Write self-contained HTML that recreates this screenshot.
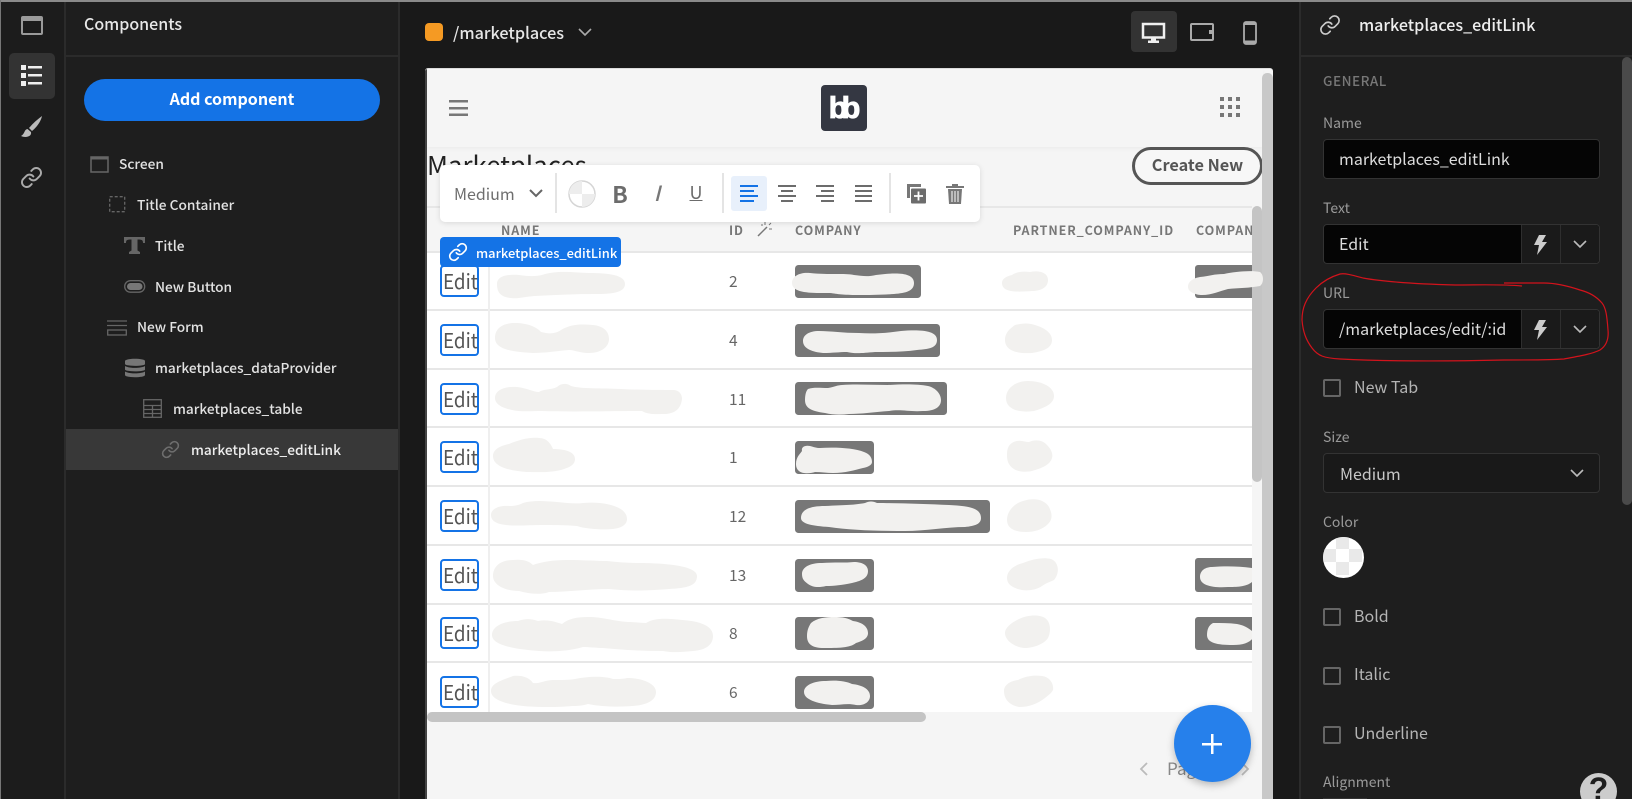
<!DOCTYPE html>
<html><head><meta charset="utf-8"><style>
html,body{margin:0;padding:0;width:1632px;height:799px;overflow:hidden;background:#191919}
*{box-sizing:border-box}
body{position:relative;font-family:"Noto Sans CJK JP","Liberation Sans",sans-serif}
.b{position:absolute}
.t{position:absolute;white-space:nowrap;line-height:20px;height:20px}
svg{position:absolute;overflow:visible}
.tree{color:#e2e2e2;font-size:13.700px;font-weight:500}
.lab{color:#9a9a9a;font-size:14px}
.inp{position:absolute;left:1323px;width:277px;height:40px;background:#050505;border:1px solid #333;border-radius:4px}
.sq{position:absolute;top:0;bottom:0;background:#1a1a1a;border-left:1px solid #2e2e2e}
.cb{position:absolute;left:1323px;width:18px;height:18px;border:2px solid #666;border-radius:2px}
.cl{color:#b4b4b4;font-size:16px}
.edit{position:absolute;left:440px;width:39px;background:#fff;border:2.500px solid #1473e6;border-radius:4px}
.et{position:absolute;left:443px;font-size:20.500px;color:#555;line-height:24px;white-space:nowrap;transform:scaleX(.92);transform-origin:left center}
.id{position:absolute;left:729px;font-size:15.500px;color:#666;line-height:20px}
.th{position:absolute;top:219.500px;font-size:12.500px;line-height:20px;font-weight:700;color:#777;letter-spacing:.9px;white-space:nowrap}
.rl{position:absolute;left:427px;width:825px;height:2px;background:#e7e7e7}
</style></head><body>
<!-- edges -->
<div class="b" style="left:0;top:0;width:1632px;height:2px;background:#8a8a8a"></div>
<div class="b" style="left:0;top:0;width:1px;height:799px;background:#777"></div>
<!-- rail -->
<div class="b" style="left:1px;top:2px;width:63px;height:797px;background:#1c1c1c"></div>
<div class="b" style="left:64px;top:2px;width:2px;height:797px;background:#2b2b2b"></div>
<!-- left panel -->
<div class="b" style="left:66px;top:2px;width:332px;height:797px;background:#1e1e1e"></div>
<div class="b" style="left:66px;top:55px;width:332px;height:2px;background:#2b2b2b"></div>
<div class="b" style="left:398px;top:2px;width:2px;height:797px;background:#2b2b2b"></div>
<div class="b" style="left:9px;top:53px;width:46px;height:46px;background:#333;border-radius:5px"></div>
<svg style="left:21px;top:16px" width="22" height="19"><rect x="1" y="1" width="20" height="17" rx="1" fill="none" stroke="#9a9a9a" stroke-width="2"/><rect x="1" y="1" width="20" height="4" fill="#9a9a9a"/></svg>
<svg style="left:21px;top:65px" width="22" height="21" fill="#eee"><rect y="0" width="5" height="5"/><rect y="8" width="5" height="5"/><rect y="16" width="5" height="5"/><rect x="7" y="1" width="14" height="2.500"/><rect x="7" y="9" width="14" height="2.500"/><rect x="7" y="17" width="14" height="2.500"/></svg>
<svg style="left:21px;top:116px" width="22" height="22" fill="#bbb"><path d="M21 0 C17 3 12 7 8 12 L11 15 C16 11 20 5 21 0Z"/><path d="M6.500 13 C3 13.500 4 18 0 20 C4 22 11 21 10 16Z"/></svg>
<svg style="left:20px;top:166px" width="23" height="23" viewBox="0 0 24 24" fill="none" stroke="#aaa" stroke-width="2" stroke-linecap="round"><path d="M10 13a5 5 0 0 0 7.540.54l3-3a5 5 0 0 0-7.070-7.070l-1.720 1.710M14 11a5 5 0 0 0-7.540-.54l-3 3a5 5 0 0 0 7.070 7.070l1.710-1.710"/></svg>

<div class="t" style="left:84px;top:13px;color:#e8e8e8;font-size:16px;font-weight:500">Components</div>
<div class="b" style="left:84px;top:79px;width:296px;height:42px;border-radius:21px;background:#1473e6"></div>
<div class="t" style="left:84px;top:88px;width:296px;text-align:center;color:#fff;font-size:16px;font-weight:700">Add component</div>
<div class="b" style="left:66px;top:429px;width:332px;height:41px;background:#383838"></div>

<svg style="left:90px;top:156px" width="19" height="17"><rect x="1" y="1" width="17" height="15" fill="none" stroke="#666" stroke-width="1.500"/><rect x="1" y="1" width="17" height="2.500" fill="#666"/></svg>
<div class="t tree" style="left:119px;top:153px">Screen</div>
<svg style="left:109px;top:196px" width="17" height="17"><rect x=".7" y=".7" width="15" height="15" fill="none" stroke="#666" stroke-width="1.300" stroke-dasharray="3 2"/></svg>
<div class="t tree" style="left:137px;top:194px">Title Container</div>
<svg style="left:124px;top:237px" width="21" height="17" fill="#666"><path d="M0 0H21V6H19C19 3 18 2.500 13.500 2.500V13.500L16 15V17H5V15L7.500 13.500V2.500C3 2.500 2 3 2 6H0Z"/></svg>
<div class="t tree" style="left:155px;top:235px">Title</div>
<svg style="left:124px;top:280px" width="22" height="13"><rect x=".7" y=".7" width="20" height="11.500" rx="5.700" fill="none" stroke="#666" stroke-width="1.300"/><rect x="3" y="3" width="15.500" height="7" rx="3.500" fill="#777"/></svg>
<div class="t tree" style="left:155px;top:276px">New Button</div>
<svg style="left:107px;top:320px" width="20" height="16" fill="none" stroke="#666" stroke-width="1.300"><path d="M0 1H20M0 5.500H20"/><rect x=".7" y="10" width="18.600" height="5"/></svg>
<div class="t tree" style="left:137px;top:316px">New Form</div>
<svg style="left:125px;top:358px" width="20" height="20" fill="#777"><path d="M0 3C0 0 20 0 20 3V6C20 8.500 0 8.500 0 6Z"/><path d="M0 8C4 10.500 16 10.500 20 8V11.500C20 14 0 14 0 11.500Z"/><path d="M0 13.500C4 16 16 16 20 13.500V17C20 20 0 20 0 17Z"/></svg>
<div class="t tree" style="left:155px;top:357px">marketplaces_dataProvider</div>
<svg style="left:143px;top:399px" width="19" height="19" fill="none" stroke="#666" stroke-width="1.300"><rect x=".7" y=".7" width="17.600" height="17.600"/><path d="M1 6.500H18M1 10.500H18M1 14.500H18M9.500 6.500V18" /></svg>
<div class="t tree" style="left:173px;top:398px">marketplaces_table</div>
<svg style="left:161px;top:440px" width="19" height="19" viewBox="0 0 24 24" fill="none" stroke="#6e6e6e" stroke-width="2" stroke-linecap="round"><path d="M10 13a5 5 0 0 0 7.540.54l3-3a5 5 0 0 0-7.070-7.070l-1.720 1.710M14 11a5 5 0 0 0-7.540-.54l-3 3a5 5 0 0 0 7.070 7.070l1.710-1.710"/></svg>
<div class="t tree" style="left:191px;top:439px;color:#eee">marketplaces_editLink</div>

<!-- top bar -->
<div class="b" style="left:425px;top:23px;width:18px;height:18px;border-radius:4px;background:#f59a23"></div>
<div class="t" style="left:453px;top:21.500px;color:#e6e6e6;font-size:16.200px;font-weight:500">/marketplaces</div>
<svg style="left:578px;top:28px" width="14" height="9" fill="none" stroke="#aaa" stroke-width="1.600"><path d="M1 1L7 7L13 1"/></svg>
<div class="b" style="left:1131px;top:11px;width:46px;height:41px;border-radius:4px;background:#333"></div>
<svg style="left:1142px;top:23px" width="23" height="20"><rect x="1" y="1" width="21" height="13.500" fill="none" stroke="#f0f0f0" stroke-width="2.500"/><rect x="9" y="15" width="5" height="3" fill="#f0f0f0"/><rect x="6" y="17.500" width="11" height="2.500" fill="#f0f0f0"/></svg>
<svg style="left:1190px;top:23px" width="24" height="18"><rect x="1" y="1" width="22" height="16" rx="1" fill="none" stroke="#aaa" stroke-width="2"/><rect x="19" y="7" width="4" height="4" fill="#aaa"/></svg>
<svg style="left:1243px;top:21px" width="14" height="24"><rect x="1" y="1" width="12" height="22" rx="2" fill="none" stroke="#aaa" stroke-width="1.800"/><rect x="1" y="1" width="12" height="3" fill="#aaa"/><rect x="1" y="19.500" width="12" height="3.500" fill="#aaa"/></svg>

<!-- frame -->
<div class="b" style="left:425px;top:68px;width:848px;height:731px;background:#f5f5f5;border-top:1px solid #ddd;border-radius:3px 3px 0 0;overflow:hidden">
 <div class="b" style="left:0;top:0;width:2px;height:731px;background:#444"></div>
</div>
<div class="t" style="left:427px;top:148px;height:34px;line-height:34px;font-size:25.800px;color:#222">Marketplaces</div>
<div class="b" style="left:427px;top:69px;width:836px;height:78px;background:#f5f5f5;box-shadow:0 2px 4px rgba(0,0,0,.04)"></div>
<svg style="left:449px;top:100px" width="19" height="16" fill="#777"><rect width="19" height="2.500" y="0"/><rect width="19" height="2.500" y="7"/><rect width="19" height="2.500" y="13.500"/></svg>
<div class="b" style="left:821px;top:85px;width:46px;height:46px;border-radius:4px;background:#343742"></div>
<div class="t" style="left:821px;top:90px;width:46px;height:36px;line-height:36px;text-align:center;font-family:'Liberation Sans',sans-serif;font-weight:700;font-size:31px;letter-spacing:-6px;text-indent:-5px;color:#fff;-webkit-text-stroke:.8px #fff">bb</div>
<svg style="left:1220px;top:97px" width="20" height="20" fill="#777"><rect width="4" height="4"/><rect x="8" width="4" height="4"/><rect x="16" width="4" height="4"/><rect y="8" width="4" height="4"/><rect x="8" y="8" width="4" height="4"/><rect x="16" y="8" width="4" height="4"/><rect y="16" width="4" height="4"/><rect x="8" y="16" width="4" height="4"/><rect x="16" y="16" width="4" height="4"/></svg>
<div class="b" style="left:1132px;top:147px;width:131px;height:38px;border:3px solid #555;border-radius:19px;background:#f7f7f7"></div>
<div class="t" style="left:1132px;top:154px;width:131px;text-align:center;font-size:16.300px;font-weight:700;color:#555">Create New</div>
<!-- scrollbars -->
<div class="b" style="left:1262px;top:73px;width:11px;height:726px;background:#c8c8c8;border-radius:5px 5px 0 0"></div>

<!-- table -->
<div class="b" style="left:427px;top:206px;width:825px;height:2px;background:#e7e7e7"></div>
<div class="b" style="left:427px;top:251px;width:825px;height:461px;background:#fff;border-top:2px solid #e7e7e7"></div>
<div class="th" style="left:501px">NAME</div>
<div class="th" style="left:729px">ID</div>
<svg style="left:757px;top:222px" width="15" height="15" fill="none" stroke="#777" stroke-width="1.500"><path d="M1 14L10 5"/><path d="M8 0V3M12 3L14 1M12 7H15M6 3H4" stroke-width="1"/></svg>
<div class="th" style="left:795px">COMPANY</div>
<div class="th" style="left:1013px">PARTNER_COMPANY_ID</div>
<div class="b" style="left:1196px;top:208px;width:56px;height:43px;overflow:hidden"><div class="th" style="left:0;top:11.500px">COMPANY</div></div>
<div class="rl" style="top:309px"></div><div class="rl" style="top:368px"></div><div class="rl" style="top:426px"></div><div class="rl" style="top:485px"></div><div class="rl" style="top:544px"></div><div class="rl" style="top:603px"></div><div class="rl" style="top:661px"></div>
<div class="b" style="left:488px;top:252px;width:2px;height:460px;background:#efefef"></div>

<div class="edit" style="top:265px;height:32px"></div><div class="et" style="top:268px">Edit</div>
<div class="edit" style="top:324px;height:32px"></div><div class="et" style="top:327px">Edit</div>
<div class="edit" style="top:383px;height:32px"></div><div class="et" style="top:386px">Edit</div>
<div class="edit" style="top:441px;height:32px"></div><div class="et" style="top:444px">Edit</div>
<div class="edit" style="top:500px;height:32px"></div><div class="et" style="top:503px">Edit</div>
<div class="edit" style="top:559px;height:32px"></div><div class="et" style="top:562px">Edit</div>
<div class="edit" style="top:617px;height:32px"></div><div class="et" style="top:620px">Edit</div>
<div class="edit" style="top:676px;height:32px"></div><div class="et" style="top:679px">Edit</div>

<div class="id" style="top:271px">2</div><div class="id" style="top:330px">4</div><div class="id" style="top:389px">11</div><div class="id" style="top:447px">1</div><div class="id" style="top:506px">12</div><div class="id" style="top:565px">13</div><div class="id" style="top:623px">8</div><div class="id" style="top:682px">6</div>

<!-- chips and scribbles -->
<svg style="left:0;top:0" width="1632" height="799">
<g fill="#777">
<rect x="795" y="265" width="126" height="33" rx="3.500"/><rect x="795" y="324" width="145" height="33" rx="3.500"/><rect x="795" y="382" width="152" height="33" rx="3.500"/><rect x="795" y="441" width="79" height="33" rx="3.500"/><rect x="795" y="500" width="195" height="33" rx="3.500"/><rect x="795" y="559" width="79" height="33" rx="3.500"/><rect x="795" y="617" width="79" height="33" rx="3.500"/><rect x="795" y="676" width="79" height="33" rx="3.500"/>
<path d="M1195 268a3 3 0 0 1 3-3h55v33h-55a3 3 0 0 1-3-3z"/><path d="M1195 561a3 3 0 0 1 3-3h54v34h-54a3 3 0 0 1-3-3z"/><path d="M1195 620a3 3 0 0 1 3-3h54v33h-54a3 3 0 0 1-3-3z"/>
</g>
<g fill="#f2f1ef">
<!-- names -->
<path d="M497 284c0-8 10-10 22-9c14 2 20 1 26-1c16-4 30-1 44-1c20 0 36 2 36 11c0 9-14 10-30 10c-20 0-40 1-60 2c-14 1-16 3-24 2c-10-1-14-5-14-14z"/>
<path d="M495 338c0-10 8-15 20-15c12 0 22 4 26 9c8 2 14 2 20-2c10-6 20-6 32-5c10 1 16 6 16 14c0 8-8 14-20 14c-10 0-14-3-20-3c-12 1-24 3-36 3c-22-1-38-4-38-15z"/>
<path d="M495 398c0-8 10-12 22-11c10 1 16 5 22 5c4-3 12-2 18-5c4-4 10-4 14-1c10 3 30 2 50 3c20 1 40 1 52 1c6 0 9 4 9 9c-1 8-5 14-16 15c-8 0-18 1-24-3c-30 0-70 1-100 0c-10 0-22 1-30-1c-10-2-17-6-17-12z"/>
<path d="M493 456c0-6 6-10 16-12c10-4 20-7 30-6c8 0 12 6 14 11c10 0 22 2 22 10c0 7-8 9-14 11c-14 3-24 2-34 2c-14-1-34-4-34-16z"/>
<path d="M491 515c0-6 8-10 18-9c6 0 10-1 14-3c10-3 22-2 34-1c10 1 18 2 26 1c20-2 44 3 44 16c0 6-6 9-14 10c-10 1-28 0-36-3c-12-1-24-1-36-1c-20 0-50 4-50-10z"/>
<path d="M493 576c0-10 8-16 20-16c10-1 16 1 20 5c8-3 20-5 34-5c16 0 30 1 40 1c10 1 20 2 30 2c24 0 60 2 60 13c0 10-10 12-28 13c-24 2-40 2-60 0c-22 0-40 3-60 3c-8 3-20 2-30-1c-14 0-26-6-26-15z"/>
<path d="M492 635c0-9 12-14 26-14c8-3 14-2 20 0c10-2 18 1 24 3c6-5 14-7 26-7c16 0 24 4 40 5c8 0 12 1 18 1c8-5 20-5 36-3c18 1 31 6 31 16c0 8-6 14-20 15c-10 1-20 2-30 0c-20 0-40-1-60-3c-6 0-14-1-20-1c-14 4-30 5-44 4c-26-2-47-6-47-16z"/>
<path d="M491 691c0-8 12-11 22-15c8-1 16 1 20 7c8 1 10-3 22-3c6 0 14 0 20-1c14-3 30-3 38 0c6 0 10 0 14-1c16 0 29 6 29 14c0 8-8 13-24 14c-10 1-30 1-44-2c-6 2-12 2-16 2c-20 2-81 3-81-15z"/>
<!-- chips -->
<path d="M792 283c0-7 8-11 18-10c20 2 34 0 44 2c8 1 14 2 22 0c16-2 38-4 38 8c0 8-8 10-20 11c-14 1-24 1-36 1c-16 0-20-1-28-2c-16 0-38 1-38-10z"/>
<path d="M803 341c0-6 6-10 16-10c12 0 24 2 40 2c14 1 28 0 42-2c14-1 36-2 36 9c0 8-8 9-20 10c-14 2-28 2-42 2c-12 1-20 2-28 0c-8 0-14 1-24 1c-10-1-20-4-20-12z"/>
<path d="M805 400c0-5 1-9 3-11c6-2 12-1 20-1c6-1 10-3 14-3c14-1 30 0 46 0c16-1 30-1 40 1c8 2 13 8 13 14c0 7-6 11-18 11c-14 1-22-2-34 0c-14 1-28 3-40 3c-8 1-16 1-24-1c-14-2-20-5-20-13z"/>
<path d="M796 464c0-7 4-10 6-13c-1-4 3-6 8-5c4 1 6 2 10 2c16-1 34 0 44 4c6 2 8 6 8 10c0 3-4 5-9 6c-8 2-18 5-30 5c-6 0-12-1-18-1c-6 2-19 3-19-8z"/>
<path d="M801 518c0-8 8-12 24-12c20-1 30-1 40-3c4-2 8-2 12 0c20 0 50 1 72 2c20 1 32 3 32 13c0 6-6 8-16 9c-18 0-40 4-60 4c-30 0-56-1-76-4c-16-1-28-3-28-9z"/>
<path d="M802 574c0-7 8-11 20-11c12-1 24 0 32-1c8 0 14 3 14 9c0 8-8 10-16 12c-10 2-18 3-26 3c-8 2-14 1-18-2c-4-3-6-5-6-10z"/>
<path d="M807 636c0-6 2-10 4-13c6-5 14-6 24-6c10 0 14 2 18 4c8 1 15 5 15 12c0 6-6 8-12 10c-6 5-18 5-32 5c-12 0-17-4-17-12z"/>
<path d="M804 692c0-7 10-11 22-11c10-1 20 0 26 3c10 1 18 5 18 12c0 6-6 10-14 9c-8-2-16 0-24 0c-10-1-28-4-28-13z"/>
<!-- partner -->
<path d="M1002 283c0-5 6-7 10-8c4-3 10-4 18-3c10-2 18 1 18 8c0 8-8 11-16 11c-14 1-30 2-30-8z"/>
<path d="M1005 340c0-8 6-12 10-15c8-2 14-2 20 0c10 3 17 8 17 15c0 8-8 11-20 13c-14 1-27-2-27-13z"/>
<path d="M1006 398c0-10 10-17 22-17c14 0 26 6 26 15c0 8-10 12-20 15c-14 2-28-1-28-13z"/>
<path d="M1007 454c0-8 4-12 10-13c4-1 8 1 12 1c6-3 14-2 18 3c5 5 6 10 5 13c-2 7-10 10-20 13c-16 3-22-4-24-9c-1-3-1-5-1-8z"/>
<path d="M1007 520c0-8 6-16 16-19c12-4 22-1 26 6c4 8 3 13-1 17c-6 6-14 8-22 8c-12 0-19-4-19-12z"/>
<path d="M1007 578c0-8 8-13 16-15c10-4 20-6 28-4c8 3 9 14 3 21c-4 2-8 3-12 6c-6 4-14 5-20 4c-10-2-15-6-15-12z"/>
<path d="M1005 633c0-6 8-11 14-14c8-4 20-5 26-1c6 4 6 14 3 20c-4 6-14 10-24 10c-6 0-19-6-19-15z"/>
<path d="M1004 691c0-6 6-10 14-11c8-4 16-5 24-4c8 1 12 8 11 14c-2 4-6 6-8 8c-8 6-16 9-26 9c-10-2-15-8-15-16z"/>
<!-- last col -->
<path d="M1200 577c0-7 6-10 12-10c12-1 26-1 40 1v14c-6 5-16 5-24 5c-14 1-28-1-28-10z"/>
<path d="M1207 635c0-6 2-10 6-12c8 0 16 0 24 1c6 1 12 4 16 8v6c-4 5-10 7-20 7c-16 0-26-2-26-10z"/>
</g>
</svg>

<!-- scrollbars -->
<div class="b" style="left:1252px;top:206px;width:10px;height:276px;background:#c4c4c4;border-radius:5px"></div>
<div class="b" style="left:1252px;top:482px;width:10px;height:317px;background:#f5f5f5"></div>
<div class="b" style="left:427px;top:712px;width:499px;height:10px;background:#c4c4c4;border-radius:5px"></div>
<svg style="left:0;top:0" width="1632" height="799" fill="#f2f1ef"><path d="M1188 287c0-6 6-9 12-10c10-1 14-3 24-3c10-2 26-4 36-2c4 3 4 11 0 14c-10 2-22 2-32 3c-8 2-16 6-26 6c-6 0-14-3-14-8z"/></svg>

<!-- pagination -->
<svg style="left:1139px;top:762px" width="9" height="14" fill="none" stroke="#bbb" stroke-width="1.800"><path d="M8 1L2 7L8 13"/></svg>
<div class="t" style="left:1167px;top:758px;font-size:17px;color:#888">Page</div>
<svg style="left:1241px;top:762px" width="9" height="14" fill="none" stroke="#bbb" stroke-width="1.800"><path d="M1 1L7 7L1 13"/></svg>
<div class="b" style="left:1174px;top:705px;width:77px;height:77px;border-radius:50%;background:#2680eb;box-shadow:0 3px 8px rgba(0,0,0,.25)"></div>
<svg style="left:1202px;top:734px" width="20" height="20" fill="#fff"><rect x="9" y="0" width="2.500" height="20"/><rect x="0" y="9" width="20" height="2.500"/></svg>

<!-- toolbar -->
<div class="b" style="left:440px;top:165px;width:540px;height:57px;background:#fff;border-radius:5px;box-shadow:0 1px 6px rgba(0,0,0,.12)"></div>
<div class="t" style="left:454px;top:183px;font-size:16px;color:#6e6e6e">Medium</div>
<svg style="left:529px;top:189px" width="14" height="9" fill="none" stroke="#666" stroke-width="2"><path d="M1 1L7 7L13 1"/></svg>
<div class="b" style="left:555px;top:173px;width:2px;height:40px;background:#e4e4e4"></div>
<svg style="left:568px;top:180px" width="28" height="28"><circle cx="14" cy="14" r="13" fill="#fff" stroke="#d5d5d5" stroke-width="1.500"/><path d="M14 1A13 13 0 0 0 1 14H14Z M14 14H27A13 13 0 0 1 14 27Z" fill="#ededed"/></svg>
<div class="t" style="left:610px;top:183px;width:20px;text-align:center;font-size:23px;font-weight:700;color:#6c6c6c">B</div>
<div class="t" style="left:647px;top:183px;width:20px;text-align:center;font-size:21px;font-style:italic;font-weight:500;color:#777">I</div>
<div class="t" style="left:686px;top:182px;width:20px;text-align:center;font-size:18px;color:#6c6c6c;text-decoration:underline">U</div>
<div class="b" style="left:722px;top:173px;width:2px;height:40px;background:#e4e4e4"></div>
<div class="b" style="left:731px;top:176px;width:36px;height:35px;background:#e8f0fb;border-radius:3px"></div>
<svg style="left:740px;top:184px" width="20" height="20" fill="#1473e6"><rect y="1" width="18" height="2"/><rect y="6" width="14" height="2"/><rect y="11" width="18" height="2"/><rect y="16" width="14" height="2"/></svg>
<svg style="left:778px;top:184px" width="20" height="20" fill="#6c6c6c"><rect y="1" width="18" height="2"/><rect x="3" y="6" width="12" height="2"/><rect y="11" width="18" height="2"/><rect x="3" y="16" width="12" height="2"/></svg>
<svg style="left:816px;top:184px" width="20" height="20" fill="#6c6c6c"><rect y="1" width="18" height="2"/><rect x="5" y="6" width="13" height="2"/><rect y="11" width="18" height="2"/><rect x="5" y="16" width="13" height="2"/></svg>
<svg style="left:855px;top:184px" width="20" height="20" fill="#6c6c6c"><rect y="1" width="17" height="2"/><rect y="6" width="17" height="2"/><rect y="11" width="17" height="2"/><rect y="16" width="17" height="2"/></svg>
<div class="b" style="left:889px;top:173px;width:2px;height:40px;background:#e4e4e4"></div>
<svg style="left:907px;top:184px" width="20" height="20"><path d="M0 0H14V3H3V14H0Z" fill="#777"/><rect x="4" y="4.500" width="15" height="15" rx="1" fill="#6c6c6c"/><path d="M11.500 7.500V16.500M7 12H16" stroke="#fff" stroke-width="1.800"/></svg>
<svg style="left:946px;top:184px" width="18" height="20" fill="#777"><rect x="0" y="2" width="18" height="2"/><rect x="6" y="0" width="6" height="3"/><path d="M2 5H16L15 20H3Z"/><path d="M6 7V18M9 7V18M12 7V18" stroke="#fff" stroke-width="1"/></svg>

<!-- tag -->
<div class="b" style="left:440px;top:237px;width:181px;height:30px;background:#1473e6;border-radius:4px"></div>
<svg style="left:448px;top:242px" width="20" height="20" viewBox="0 0 24 24" fill="none" stroke="#fff" stroke-width="2" stroke-linecap="round"><path d="M10 13a5 5 0 0 0 7.540.54l3-3a5 5 0 0 0-7.070-7.070l-1.720 1.710M14 11a5 5 0 0 0-7.540-.54l-3 3a5 5 0 0 0 7.070 7.070l1.710-1.710"/></svg>
<div class="t" style="left:476px;top:242.500px;color:#fff;font-size:12.900px;font-weight:500">marketplaces_editLink</div>

<!-- right rail -->
<div class="b" style="left:1299px;top:2px;width:2px;height:797px;background:#2b2b2b"></div>
<div class="b" style="left:1301px;top:2px;width:331px;height:797px;background:#1e1e1e"></div>
<div class="b" style="left:1301px;top:55px;width:331px;height:2px;background:#2b2b2b"></div>
<div class="b" style="left:1622px;top:57px;width:10px;height:448px;background:#4a4a4a;border-radius:5px"></div>
<svg style="left:1319px;top:14px" width="22" height="22" viewBox="0 0 24 24" fill="none" stroke="#ccc" stroke-width="1.800" stroke-linecap="round"><path d="M10 13a5 5 0 0 0 7.540.54l3-3a5 5 0 0 0-7.070-7.070l-1.720 1.710M14 11a5 5 0 0 0-7.540-.54l-3 3a5 5 0 0 0 7.070 7.070l1.710-1.710"/></svg>
<div class="t" style="left:1359px;top:14px;color:#eee;font-size:16.100px;font-weight:500">marketplaces_editLink</div>
<div class="t" style="left:1323px;top:70px;color:#777;font-size:13.500px;font-weight:500;letter-spacing:.5px">GENERAL</div>

<div class="t lab" style="left:1323px;top:113px">Name</div>
<div class="inp" style="top:139px"></div>
<div class="t" style="left:1339px;top:148px;font-size:16px;color:#ddd">marketplaces_editLink</div>

<div class="t lab" style="left:1323px;top:198px">Text</div>
<div class="inp" style="top:224px;overflow:hidden"><div class="sq" style="left:197px;width:39px"></div><div class="sq" style="left:236px;width:40px"></div></div>
<div class="t" style="left:1339px;top:233px;font-size:16px;color:#ddd">Edit</div>
<svg style="left:1534px;top:235px" width="13" height="20" fill="#ccc"><path d="M5 0H12L8 7H13L3 20L5 10H0Z"/></svg>
<svg style="left:1573px;top:240px" width="14" height="9" fill="none" stroke="#bbb" stroke-width="1.600"><path d="M1 1L7 7L13 1"/></svg>

<div class="t lab" style="left:1323px;top:283px">URL</div>
<div class="inp" style="top:309px;overflow:hidden"><div class="sq" style="left:197px;width:39px"></div><div class="sq" style="left:236px;width:40px"></div></div>
<div class="t" style="left:1339px;top:318px;font-size:16px;color:#ddd">/marketplaces/edit/:id</div>
<svg style="left:1534px;top:320px" width="13" height="20" fill="#ccc"><path d="M5 0H12L8 7H13L3 20L5 10H0Z"/></svg>
<svg style="left:1573px;top:325px" width="14" height="9" fill="none" stroke="#bbb" stroke-width="1.600"><path d="M1 1L7 7L13 1"/></svg>

<svg style="left:0;top:0" width="1632" height="799" fill="none" stroke="#d3131c" stroke-width="1.200"><path d="M1522 286C1500 284 1480 285 1455 285C1420 284 1385 282 1363 278C1352 275 1345 273 1340 274C1330 277 1322 282 1316 288C1306 298 1302 308 1302 320C1303 332 1306 340 1312 348C1318 356 1324 358 1340 359C1400 362 1460 361 1504 360C1530 360 1550 360 1564 359C1580 356 1592 354 1600 350C1606 346 1609 340 1608 330C1607 316 1606 308 1602 303C1596 296 1588 292 1580 290C1565 285 1552 283 1544 283C1530 283 1515 283 1504 283"/></svg>

<div class="cb" style="top:379px"></div>
<div class="t cl" style="left:1354px;top:376px">New Tab</div>
<div class="t lab" style="left:1323px;top:427px">Size</div>
<div class="b" style="left:1323px;top:453px;width:277px;height:40px;background:#191919;border:1px solid #333;border-radius:4px"></div>
<div class="t" style="left:1340px;top:463px;font-size:16px;color:#c8c8c8">Medium</div>
<svg style="left:1570px;top:469px" width="14" height="9" fill="none" stroke="#bbb" stroke-width="1.600"><path d="M1 1L7 7L13 1"/></svg>
<div class="t lab" style="left:1323px;top:512px">Color</div>
<svg style="left:1323px;top:537px" width="41" height="41"><defs><clipPath id="c"><circle cx="20.500" cy="20.500" r="20.500"/></clipPath></defs><circle cx="20.500" cy="20.500" r="20.500" fill="#fff"/><g clip-path="url(#c)" fill="#e9e9e9"><rect x="0" y="12" width="13" height="13"/><rect x="26" y="12" width="13" height="13"/><rect x="13" y="0" width="13" height="12"/><rect x="13" y="25" width="13" height="13"/></g></svg>
<div class="cb" style="top:608px"></div>
<div class="t cl" style="left:1354px;top:605px">Bold</div>
<div class="cb" style="top:667px"></div>
<div class="t cl" style="left:1354px;top:663px">Italic</div>
<div class="cb" style="top:726px"></div>
<div class="t cl" style="left:1354px;top:722px">Underline</div>
<div class="t lab" style="left:1323px;top:772px">Alignment</div>
<div class="b" style="left:1323px;top:798px;width:44px;height:1px;background:#333"></div>
<div class="b" style="left:1580px;top:773px;width:37px;height:37px;border-radius:50%;background:#ccc"></div>
<div class="t" style="left:1580px;top:774px;width:37px;height:30px;line-height:30px;text-align:center;font-family:'Liberation Sans',sans-serif;font-size:32px;font-weight:700;color:#1e1e1e">?</div>
</body></html>
